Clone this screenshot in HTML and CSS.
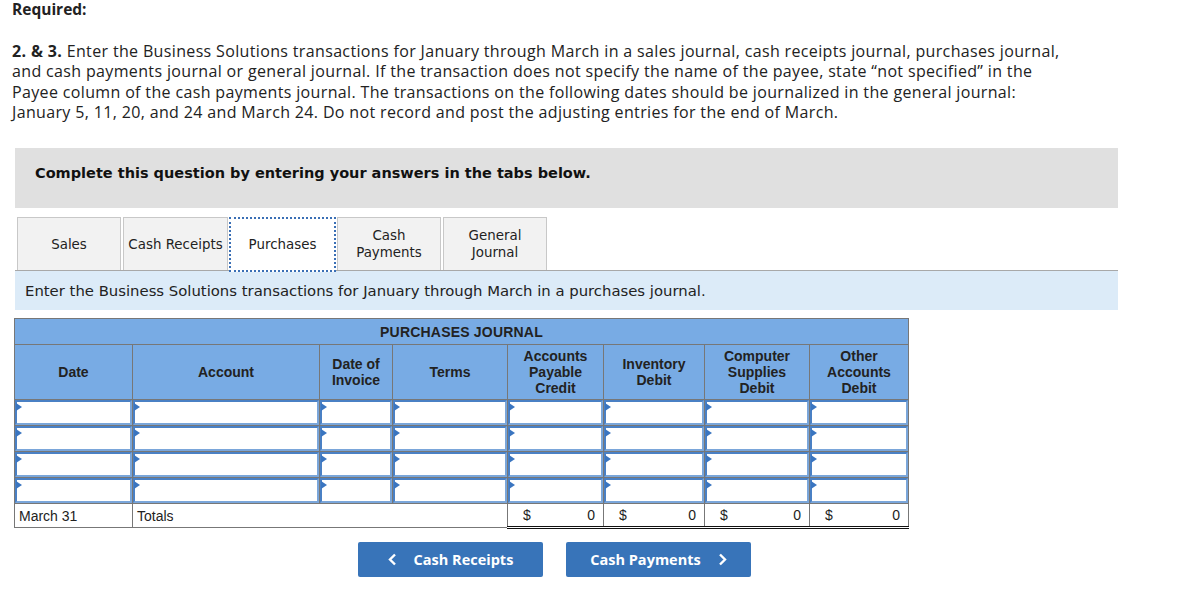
FILE: index.html
```html
<!DOCTYPE html>
<html lang="en">
<head>
  <meta charset="UTF-8">
  <title>Purchases Journal</title>
  <link rel="stylesheet" href="styles.css">
</head>
<body>

<div class="page">
  <h3 class="required">Required:</h3>

  <p class="prompt"><b>2. &amp; 3.</b> Enter the Business Solutions transactions for January through March in a sales journal, cash receipts journal, purchases journal, and cash payments journal or general journal. If the transaction does not specify the name of the payee, state “not specified” in the Payee column of the cash payments journal. The transactions on the following dates should be journalized in the general journal: January 5, 11, 20, and 24 and March 24. Do not record and post the adjusting entries for the end of March.</p>

  <div class="notice">Complete this question by entering your answers in the tabs below.</div>

  <!-- tabs -->
  <div class="tabs">
    <div class="tab">Sales</div>
    <div class="tab wide">Cash Receipts</div>
    <div class="tab active">Purchases</div>
    <div class="tab">Cash<br>Payments</div>
    <div class="tab">General<br>Journal</div>
  </div>

  <div class="instruction">Enter the Business Solutions transactions for January through March in a purchases journal.</div>

  <table class="journal">
    <colgroup>
      <col style="width:118px">
      <col style="width:187px">
      <col style="width:73px">
      <col style="width:115px">
      <col style="width:96px">
      <col style="width:101px">
      <col style="width:105px">
      <col style="width:99px">
    </colgroup>
    <tr class="title-row">
      <th colspan="8">PURCHASES JOURNAL</th>
    </tr>
    <tr class="head-row">
      <th>Date</th>
      <th>Account</th>
      <th>Date of<br>Invoice</th>
      <th>Terms</th>
      <th>Accounts<br>Payable<br>Credit</th>
      <th>Inventory<br>Debit</th>
      <th>Computer<br>Supplies<br>Debit</th>
      <th>Other<br>Accounts<br>Debit</th>
    </tr>
    <tr class="entry-row">
      <td><div class="field"></div></td><td><div class="field"></div></td><td><div class="field"></div></td><td><div class="field"></div></td>
      <td><div class="field"></div></td><td><div class="field"></div></td><td><div class="field"></div></td><td><div class="field"></div></td>
    </tr>
    <tr class="entry-row">
      <td><div class="field"></div></td><td><div class="field"></div></td><td><div class="field"></div></td><td><div class="field"></div></td>
      <td><div class="field"></div></td><td><div class="field"></div></td><td><div class="field"></div></td><td><div class="field"></div></td>
    </tr>
    <tr class="entry-row">
      <td><div class="field"></div></td><td><div class="field"></div></td><td><div class="field"></div></td><td><div class="field"></div></td>
      <td><div class="field"></div></td><td><div class="field"></div></td><td><div class="field"></div></td><td><div class="field"></div></td>
    </tr>
    <tr class="entry-row">
      <td><div class="field"></div></td><td><div class="field"></div></td><td><div class="field"></div></td><td><div class="field"></div></td>
      <td><div class="field"></div></td><td><div class="field"></div></td><td><div class="field"></div></td><td><div class="field"></div></td>
    </tr>
    <tr class="total-row">
      <td>March 31</td>
      <td colspan="3">Totals</td>
      <td class="amount"><span>$</span><span>0</span></td>
      <td class="amount"><span>$</span><span>0</span></td>
      <td class="amount"><span>$</span><span>0</span></td>
      <td class="amount"><span>$</span><span>0</span></td>
    </tr>
  </table>

  <!-- navigation -->
  <div class="nav">
    <button class="nav-btn">
      <svg class="chev" width="9" height="13" viewBox="0 0 9 13"><polyline points="7,1.5 2,6.5 7,11.5" fill="none" stroke="#fff" stroke-width="2.4"/></svg>
      Cash Receipts
    </button>
    <button class="nav-btn">
      Cash Payments
      <svg class="chev" width="9" height="13" viewBox="0 0 9 13"><polyline points="2,1.5 7,6.5 2,11.5" fill="none" stroke="#fff" stroke-width="2.4"/></svg>
    </button>
  </div>
</div>

</body>
</html>
```

FILE: styles.css
```css
* { box-sizing: border-box; margin: 0; padding: 0; }

body {
  background: #fff;
  color: #1a1a1a;
  font-family: "Open Sans", "Liberation Sans", sans-serif;
}

.page {
  padding: 0 0 0 12px;
  width: 1118px;
}

.required {
  font-size: 15.5px;
  line-height: 19px;
  font-weight: bold;
  color: #222;
}

.prompt {
  margin-top: 22px;
  max-width: 1066px;
  font-size: 16px;
  line-height: 20.3px;
  letter-spacing: 0.35px;
  color: #222;
}

.notice {
  margin: 26px 0 0 3px;
  height: 60px;
  padding: 15px 0 0 20px;
  background: #e0e0e0;
  font-family: "DejaVu Sans", sans-serif;
  font-weight: bold;
  font-size: 14.5px;
  line-height: 20px;
  color: #111;
}

/* tabs */
.tabs {
  display: flex;
  gap: 2px;
  margin: 9px 0 0 3px;
  padding-left: 2px;
  border-bottom: 1px solid #a8a8a8;
  height: 54px;
}

.tab {
  width: 104px;
  height: 53px;
  display: flex;
  align-items: center;
  justify-content: center;
  text-align: center;
  background: #f2f2f2;
  border: 1px solid #c8c8c8;
  border-bottom: none;
  font-family: "DejaVu Sans", sans-serif;
  font-size: 13.4px;
  line-height: 17px;
  color: #222;
}

.tab.wide {
  width: 105px;
}

.tab.active {
  background: #fff;
  height: 55px;
  width: 107px;
  margin: 0 -1px 0 -1px;
  border: 2px dotted #3a6fb5;
}

.instruction {
  margin-left: 3px;
  height: 39px;
  padding: 11px 0 0 10px;
  background: #dcebf8;
  font-family: "DejaVu Sans", sans-serif;
  font-size: 14.85px;
  line-height: 18px;
  color: #222;
}

/* journal table */
.journal {
  margin: 8px 0 0 2px;
  border-collapse: collapse;
  table-layout: fixed;
  width: 895px;
  font-family: "Liberation Sans", Arial, sans-serif;
  font-size: 14px;
  color: #222;
}

.journal th {
  background: #78abe4;
  border: 1px solid #777;
  font-weight: bold;
  line-height: 16px;
  text-align: center;
}

.title-row th {
  height: 26px;
  padding-top: 1px;
  letter-spacing: 0.2px;
}

.head-row th {
  height: 55px;
  padding-bottom: 1px;
}

.entry-row td {
  border: 1px solid #777;
  padding: 0;
  height: 26px;
}

.field {
  position: relative;
  height: 25px;
  border: 2px solid #4a80c4;
  border-right-color: #7aa6da;
  border-bottom-color: #7aa6da;
  background: #fff;
}

.field::before {
  content: "";
  position: absolute;
  top: 1px;
  left: -1px;
  border-left: 6px solid #3a75c0;
  border-top: 4px solid transparent;
  border-bottom: 4px solid transparent;
}

.total-row td {
  border: 1px solid #777;
  height: 24px;
  padding: 0 4px;
  line-height: 16px;
  color: #222;
}

.total-row td.amount {
  border-top: 1px solid #111;
  border-bottom: 3px double #111;
  padding: 0 8px 0 15px;
}

.amount {
  white-space: nowrap;
}

.amount span:last-child {
  float: right;
}

/* navigation buttons */
.nav {
  display: flex;
  gap: 23px;
  margin: 13px 0 0 346px;
}

.nav-btn {
  width: 185px;
  height: 35px;
  border: none;
  border-radius: 2px;
  background: #3874b9;
  color: #fff;
  font-family: "Open Sans", "Liberation Sans", sans-serif;
  font-weight: bold;
  font-size: 14.5px;
  display: flex;
  align-items: center;
  justify-content: center;
  gap: 17px;
}

.chev {
  display: block;
}
```
